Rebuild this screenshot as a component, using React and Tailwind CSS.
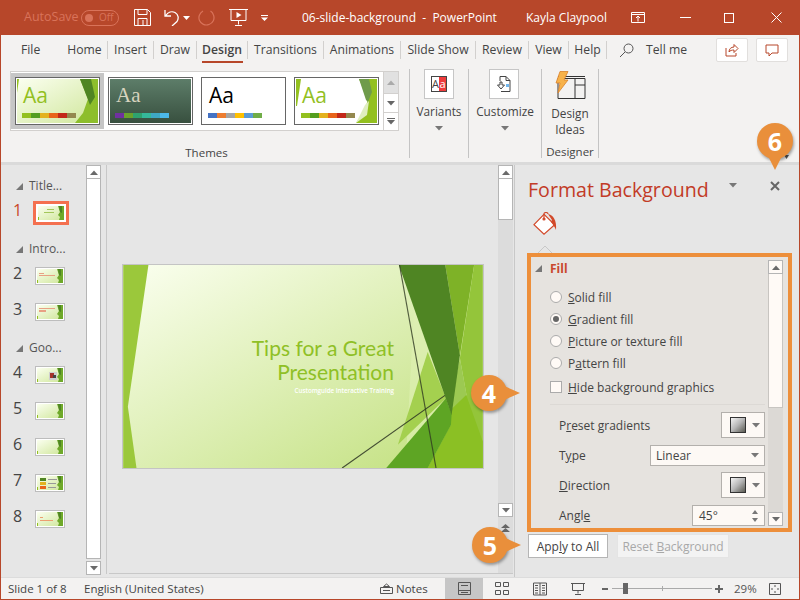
import React from "react";

const swatches = {
  green: ["#93c01f", "#549e1f", "#e3b21f", "#e8641b", "#c3281a", "#94884f"],
  dark: ["#7030a0", "#6aa22c", "#2ea36f", "#35b89a", "#3ea8c4", "#4cb9ea"],
  plain: ["#4472c4", "#ed7d31", "#a5a5a5", "#ffc000", "#5b9bd5", "#70ad47"],
};

const tabs = [
  ["Home", "w-[46px]"],
  ["Insert", "w-[46px]"],
  ["Draw", "w-[43px]"],
  ["Design", "w-[51px]"],
  ["Transitions", "w-[76px]"],
  ["Animations", "w-[77px]"],
  ["Slide Show", "w-[75px]"],
  ["Review", "w-[53px]"],
  ["View", "w-[40px]"],
  ["Help", "w-[38px]"],
];

const Caret = ({ className = "" }) => (
  <svg width="8" height="5" viewBox="0 0 8 5" className={className}>
    <path d="M0 0h8L4 4.500z" fill="currentColor" />
  </svg>
);

const Corner = () => (
  <svg width="7" height="7" viewBox="0 0 7 7" className="text-[#777]">
    <path d="M7 0v7H0z" fill="currentColor" />
  </svg>
);

const ScrollBtn = ({ down, className = "" }) => (
  <div className={`w-[15px] h-[14px] shrink-0 bg-white border border-[#b5b5b5] flex items-center justify-center text-[#6a6a6a] ${className}`}>
    <svg width="8" height="5" viewBox="0 0 8 5">
      <path d={down ? "M0 0h8L4 4.500z" : "M0 5h8L4 .5z"} fill="currentColor" />
    </svg>
  </div>
);

const ThemeThumb = ({ kind, selected }) => {
  const colors = kind === "dark" ? swatches.dark : kind === "plain" ? swatches.plain : swatches.green;
  return (
    <div className={`w-[93px] h-[56px] flex items-center justify-center ${selected ? "bg-[#c6c6c6]" : ""}`}>
      <div className="w-[85px] h-[48px] border border-[#666] bg-white p-px">
        <div className="relative w-full h-full overflow-hidden">
          <svg viewBox="0 0 81 44" width="81" height="44" className="absolute inset-0">
            <defs>
              <linearGradient id="thA" x1="0" y1="0" x2="1" y2="1">
                <stop offset="0" stopColor="#fbfff0" />
                <stop offset="1" stopColor="#cfe69a" />
              </linearGradient>
              <linearGradient id="thB" x1="0" y1="0" x2="0" y2="1">
                <stop offset="0" stopColor="#5d7d69" />
                <stop offset="1" stopColor="#38503f" />
              </linearGradient>
            </defs>
            {kind === "first" && (
              <>
                <rect width="81" height="44" fill="url(#thA)" />
                <path d="M0 0h2L0 14z" fill="#93c01f" />
                <path d="M63 0h18v44H58l8-10 5-14z" fill="#8dbe2c" />
                <path d="M63 0h11l4 18-5 8z" fill="#4f8523" />
              </>
            )}
            {kind === "dark" && <rect width="81" height="44" fill="url(#thB)" />}
            {kind === "fourth" && (
              <>
                <rect width="81" height="44" fill="#fff" />
                <path d="M0 0h5L1 27 0 27z" fill="#93c01f" />
                <path d="M63 0h18v44H60l9-13 3-11z" fill="#93c01f" />
                <path d="M63 0h10l3 13-4 10-2-2z" fill="#6f9b4b" />
                <path d="M60 44l9-18 4-4-2 14z" fill="#dfeec0" />
              </>
            )}
          </svg>
          <span
            className={`absolute left-[6px] top-[3px] text-[21px] leading-[26px] ${
              kind === "dark"
                ? "text-[#d8d4bf] font-['Liberation_Serif',serif]"
                : kind === "plain"
                ? "text-black"
                : "text-[#93c01f]"
            }`}
          >
            Aa
          </span>
          <div className="absolute left-[5px] bottom-[5px] flex">
            {colors.map((c) => (
              <div key={c} className="w-[9px] h-[5px]" style={{ backgroundColor: c }} />
            ))}
          </div>
        </div>
      </div>
    </div>
  );
};

const Thumb = ({ marks }) => (
  <svg width="26" height="14" viewBox="0 0 26 14">
    <rect width="26" height="14" fill="url(#thA)" />
    <path d="M0 11h1v3H0z" fill="#93c01f" />
    <path d="M20 0h6v14h-5l1-3-2-2 2-3z" fill="#6fa92a" />
    <path d="M21 0h3v7l-2-1z" fill="#4f8523" />
    {marks === "title" && <path d="M9 3h7v1H9zM6 6h10v1H6z" fill="#a3c75a" />}
    {marks === "intro" && <path d="M2 4h5v1H2zM2 6h16v1H2z" fill="#e8a183" />}
    {marks === "intro2" && <path d="M2 3h16v1H2zM2 5h7v2H2z" fill="#e8a183" />}
    {marks === "photo" && (
      <>
        <rect x="12" y="4" width="8" height="8" fill="#cfcfcf" />
        <rect x="13" y="5" width="4" height="5" fill="#a5322a" />
        <rect x="16" y="7" width="3" height="3" fill="#444" />
      </>
    )}
    {marks === "table" && (
      <>
        <rect x="3" y="2" width="6" height="3" fill="#4f8523" />
        <rect x="3" y="6" width="6" height="3" fill="#e3b21f" />
        <rect x="3" y="10" width="6" height="3" fill="#e8641b" />
        <path d="M11 3h9v1h-9zM11 7h8v1h-8zM11 11h8v1h-8z" fill="#999" />
      </>
    )}
    {marks === "last" && <path d="M3 5h3v1H3zM3 8h13v1H3z" fill="#ec9f70" />}
  </svg>
);

const SectionRow = ({ label, className = "" }) => (
  <div className={`h-[18px] flex items-center pl-[15px] gap-[6px] text-[#555] text-[12px] ${className}`}>
    <Corner />
    <span>{label}</span>
  </div>
);

const SlideRow = ({ n, marks, selected }) => (
  <div className="h-[36px] flex items-center relative">
    <span className={`w-[33px] pl-[12px] -mt-[7px] text-[16px] leading-[20px] ${selected ? "text-[#c9482b]" : "text-[#444]"}`}>
      {n}
    </span>
    <div className={`flex ${selected ? "-ml-px border-[3px] border-[#f4704f] bg-white p-[2px]" : "ml-px border border-[#bdbdbd] bg-white p-px"}`}>
      <Thumb marks={marks} />
    </div>
  </div>
);

const Radio = ({ children, checked }) => (
  <div className="h-[22px] flex items-center text-[#444] text-[12px]">
    <div className="w-[12px] h-[12px] ml-[19px] rounded-full border border-[#ababab] bg-[#fffaf6] flex items-center justify-center">
      {checked && <div className="w-[6px] h-[6px] rounded-full bg-[#666]" />}
    </div>
    <span className="ml-[6px] pt-px">{children}</span>
  </div>
);

const GradientBtn = ({ className = "" }) => (
  <div className={`w-[44px] h-[26px] border border-[#b3b0ac] bg-[#fdf9f5] flex items-center pl-[8px] gap-[6px] text-[#777] ${className}`}>
    <div className="w-[16px] h-[16px] border border-[#333] bg-gradient-to-br from-[#f5f5f5] via-[#b5b5b5] to-[#5c5c54]" />
    <Caret />
  </div>
);

const Callout = ({ n, className, tail }) => (
  <div className={`absolute w-[36px] h-[36px] rounded-full bg-[#e98f3b] shadow-[1px_2px_3px_rgba(0,0,0,0.35)] flex items-center justify-center text-white font-bold text-[25px] leading-none ${className}`}>
    {tail === "right" ? (
      <svg width="18" height="16" viewBox="0 0 18 16" className="absolute left-[31px] top-[10px]">
        <path d="M0 0l18 8L0 16z" fill="#e98f3b" />
      </svg>
    ) : (
      <svg width="16" height="16" viewBox="0 0 16 16" className="absolute left-[10px] top-[31px]">
        <path d="M0 0h16L8 16z" fill="#e98f3b" />
      </svg>
    )}
    <span className="relative">{n}</span>
  </div>
);

const App = () => {
  return (
    <div className="relative w-[800px] h-[600px] overflow-hidden flex flex-col bg-[#f3f2f1] border-x border-b border-[#b7472a] font-['Open_Sans',sans-serif] text-[#444]">
      {/* title bar */}
      <div className="h-[35px] shrink-0 -mx-px bg-[#b7472a] flex items-center text-white text-[12px]">
        <span className="ml-[24px] w-[50px] text-[#d9735a] text-[12.5px]">AutoSave</span>
        <div className="ml-[7px] w-[38px] h-[16px] rounded-full border border-[#d9735a] flex items-center pl-[3px] text-[#d9735a] text-[10px]">
          <div className="w-[8px] h-[8px] rounded-full bg-[#d9735a]" />
          <span className="ml-[6px]">Off</span>
        </div>
        <svg width="17" height="17" viewBox="0 0 17 17" className="ml-[15px]" fill="none" stroke="#fff" strokeWidth="1">
          <path d="M.5.5h13l3 3v13H.5zM4 .5v5h9v-5M4 16.500v-7h9v7M9 11v5" />
        </svg>
        <svg width="17" height="17" viewBox="0 0 17 17" className="ml-[13px]" fill="none" stroke="#fff" strokeWidth="1.300">
          <path d="M1 1v6h6M1.500 7C4 3 8 2 11 3.500c3.500 2 4 6 2 9L8 17" />
        </svg>
        <svg width="7" height="4" viewBox="0 0 7 4" className="ml-[2px]">
          <path d="M0 0h7L3.500 4z" fill="#fff" />
        </svg>
        <svg width="17" height="17" viewBox="0 0 17 17" className="ml-[8px]" fill="none" stroke="#d9735a" strokeWidth="1.200">
          <path d="M5 2C1.500 4 0 8 1.500 11.500 3 15 7 17 11 15.500 15 14 17 10 15.500 6 15 4.500 14 3 12.500 2" />
        </svg>
        <svg width="21" height="21" viewBox="0 0 21 21" className="ml-[13px]" fill="none" stroke="#fff" strokeWidth="1">
          <path d="M1 2.500h19M3 2.500v11h15v-11M10.500 13.500v4M7 18.500h7" />
          <path d="M8.500 5l5 3-5 3z" fill="#fff" stroke="none" />
        </svg>
        <svg width="7" height="6" viewBox="0 0 7 6" className="ml-[12px]">
          <path d="M0 0h7v1H0zM0 2.500h7L3.500 6z" fill="#fff" />
        </svg>
        <span className="ml-[34px] w-[224px] whitespace-pre">06-slide-background  -  PowerPoint</span>
        <span className="w-[105px]">Kayla Claypool</span>
        <svg width="14" height="12" viewBox="0 0 14 12" fill="none" stroke="#fff" strokeWidth="1">
          <path d="M.5 .5h13v10H.5zM.5 2.500h13M7 9.500V4.500M5 6l2-2 2 2" />
        </svg>
        <div className="ml-[35px] w-[11px] h-px bg-white" />
        <div className="ml-[33px] w-[10px] h-[10px] border border-white" />
        <svg width="11" height="11" viewBox="0 0 11 11" className="ml-[37px]" stroke="#fff" strokeWidth="1">
          <path d="M.5.5l10 10M10.500.5l-10 10" />
        </svg>
      </div>

      {/* tab row */}
      <div className="h-[30px] shrink-0 flex items-center text-[12.2px] text-[#444]">
        <span className="ml-[20px] w-[41px] pt-px">File</span>
        {tabs.map(([t, w]) => (
          <div key={t} className={`${w} h-[18px] relative flex items-center justify-center border-r border-[#d2d0ce]`}>
            <span className={`pt-px ${t === "Design" ? "font-semibold text-[#444]" : ""}`}>{t}</span>
            {t === "Design" && <div className="absolute left-[5px] right-[4px] top-[20px] h-[2px] bg-[#b7472a]" />}
          </div>
        ))}
        <svg width="15" height="15" viewBox="0 0 15 15" className="ml-[12px]" fill="none" stroke="#555" strokeWidth="1">
          <circle cx="9.500" cy="5.500" r="4.500" />
          <path d="M6 9l-5 5" />
        </svg>
        <span className="ml-[12px] w-[41px] pt-px">Tell me</span>
        <div className="ml-[29px] w-[32px] h-[24px] bg-white border border-[#e1dfdd] rounded-[2px] flex items-center justify-center">
          <svg width="14" height="14" viewBox="0 0 14 14" fill="none" stroke="#b7472a" strokeWidth="1">
            <path d="M1 5v8h10v-3M4 9c0-3 2-5 5-5V1.500l4 4-4 4V7C7 7 5 7.500 4 9z" />
          </svg>
        </div>
        <div className="ml-[8px] w-[32px] h-[24px] bg-white border border-[#e1dfdd] rounded-[2px] flex items-center justify-center">
          <svg width="14" height="13" viewBox="0 0 14 13" fill="none" stroke="#b7472a" strokeWidth="1">
            <path d="M1 1h12v8H7l-3 3V9H1z" />
          </svg>
        </div>
      </div>

      {/* ribbon */}
      <div className="h-[97px] shrink-0 flex text-[11.8px] text-[#444]">
        <div className="w-[408px] shrink-0 flex flex-col">
          <div className="ml-[9px] mt-[6px] w-[389px] h-[60px] bg-white border border-[#d2d0ce] flex">
            <div className="flex-1 flex items-center">
              <ThemeThumb kind="first" selected />
              <ThemeThumb kind="dark" />
              <ThemeThumb kind="plain" />
              <ThemeThumb kind="fourth" />
            </div>
            <div className="w-[15px] shrink-0 flex flex-col border-l border-[#d2d0ce] text-[#666]">
              <div className="h-[21px] bg-[#e1e1e1] flex items-center justify-center text-[#aaa]">
                <svg width="8" height="5" viewBox="0 0 8 5"><path d="M0 5h8L4 .5z" fill="currentColor" /></svg>
              </div>
              <div className="h-[20px] border-y border-[#d2d0ce] flex items-center justify-center"><Caret /></div>
              <div className="flex-1 flex flex-col items-center justify-center gap-px">
                <div className="w-[8px] h-px bg-[#666]" />
                <Caret />
              </div>
            </div>
          </div>
          <div className="mt-[14px] text-center pl-[3px] text-[11.5px] leading-[16px]">Themes</div>
        </div>
        <div className="mt-[4px] mb-[4px] w-[59px] shrink-0 border-l border-[#c4c4c4] flex flex-col items-center">
          <div className="w-[30px] h-[30px] bg-white border border-[#c6c6c6] flex items-center justify-center">
            <div className="w-[16px] h-[16px] relative border border-[#444] flex text-[11px] leading-[14px]">
              <span className="w-[7px] text-[#444]">A</span>
              <span className="flex-1 bg-[#ee3b3b] text-white text-center">a</span>
            </div>
          </div>
          <span className="mt-[3px] leading-[18px]">Variants</span>
          <Caret className="mt-[6px] text-[#777]" />
        </div>
        <div className="mt-[4px] mb-[4px] w-[73px] shrink-0 border-l border-[#c4c4c4] flex flex-col items-center">
          <div className="-ml-[2px] w-[30px] h-[30px] bg-white border border-[#c6c6c6] flex items-center justify-center">
            <svg width="14" height="16" viewBox="0 0 14 16" fill="none" stroke="#444" strokeWidth="1">
              <path d="M3 5V.5h6l4 4v11H4M9 .5v4h4" />
              <path d="M3 6v3H.5L4 13l3.500-4H5V6z" />
              <rect x="9" y="8" width="3" height="3" fill="#6fb6ee" stroke="none" />
            </svg>
          </div>
          <span className="mt-[3px] leading-[18px]">Customize</span>
          <Caret className="mt-[6px] text-[#777]" />
        </div>
        <div className="mt-[4px] mb-[4px] w-[58px] shrink-0 border-x border-[#c4c4c4] flex flex-col items-center relative">
          <svg width="32" height="30" viewBox="0 0 32 30" className="mt-[2px] ml-px">
            <g fill="none" stroke="#333">
              <path d="M3 7.500h27v20H3zM3 5.500h27M20 7.500v20M20 14h10" strokeWidth="1" />
            </g>
            <path d="M5 .5h8L9 9h4L3 22l2-10H1z" fill="#f7b24a" stroke="#d9822b" strokeWidth=".8" />
          </svg>
          <span className="mt-[4px] leading-[16px] text-center">Design<br />Ideas</span>
          <span className="absolute bottom-[-2px] text-[11.5px] leading-[16px]">Designer</span>
        </div>
        <svg width="5" height="4" viewBox="0 0 5 4" className="ml-auto mr-[10px] mt-[90px] text-[#555]">
          <path d="M0 0h5L2.500 4z" fill="currentColor" />
        </svg>
      </div>

      <div className="h-[3px] shrink-0 bg-[#dadada]" />

      {/* workspace */}
      <div className="h-[412px] shrink-0 flex bg-[#e6e6e6]">
        <div className="w-[85px] shrink-0 pt-[12px]">
          <SectionRow label="Title..." />
          <SlideRow n="1" marks="title" selected />
          <SectionRow label="Intro..." className="mt-[9px]" />
          <SlideRow n="2" marks="intro" />
          <SlideRow n="3" marks="intro2" />
          <SectionRow label="Goo..." className="mt-[9px]" />
          <SlideRow n="4" marks="photo" />
          <SlideRow n="5" />
          <SlideRow n="6" />
          <SlideRow n="7" marks="table" />
          <SlideRow n="8" marks="last" />
        </div>
        <div className="w-[15px] shrink-0 flex flex-col h-[410px]">
          <ScrollBtn />
          <div className="flex-1 bg-white border-x border-b border-[#b5b5b5] mb-[2px]" />
          <ScrollBtn down />
        </div>
        <div className="w-[392px] shrink-0 ml-[5px] h-[409px] border-l border-[#c8c8c8] relative">
          <div className="ml-[15px] mt-[99px] w-[362px] h-[205px] border border-[#c4c4c4] relative">
            <svg viewBox="0 0 1084 612" width="360" height="203" className="block">
              <defs>
                <linearGradient id="slideBg" x1="0" y1="0" x2="1" y2="1">
                  <stop offset="0" stopColor="#fbfff0" />
                  <stop offset="1" stopColor="#c0df7a" />
                </linearGradient>
              </defs>
              <rect width="1084" height="612" fill="url(#slideBg)" />
              <path d="M0 0h76L14 427l26 185H0z" fill="#9bc83b" />
              <path d="M884 0l88 400-118 150z" fill="#dff0b4" opacity=".6" />
              <path d="M918 262l55 140-145 140z" fill="#a4d04f" />
              <path d="M660 612l340-240" stroke="#2b3322" strokeWidth="3.500" opacity=".85" fill="none" />
              <path d="M971 0h87l-43 272z" fill="#7eb227" />
              <path d="M1058 0h26v612H918l117-220-20-112z" fill="#94c53a" />
              <path d="M1015 282l20 110-47 90-8-38z" fill="#9cc952" />
              <path d="M980 444l8 38-70 130H1084v-80l-50-140z" fill="#8bc024" />
              <path d="M973 402l17 48-2 32-70 130H793z" fill="#5ea524" />
              <path d="M831 0h140l44 272-25 180z" fill="#4f8523" />
              <path d="M833 0l110 612" stroke="#2f3a22" strokeWidth="3.500" opacity=".8" fill="none" />
            </svg>
            <div className="absolute right-[89px] top-[71px] text-right text-[#8fc026] font-['Lato',sans-serif] text-[21px] leading-[24px]">
              Tips for a Great
              <br />
              Presentation
            </div>
            <div className="absolute right-[89px] top-[121px] text-white text-[6.200px] leading-[9px] font-semibold">
              Customguide Interactive Training
            </div>
          </div>
          <div className="absolute left-[2px] right-0 bottom-0 h-px bg-[#c8c8c8]" />
        </div>
        <div className="w-[15px] shrink-0 h-[409px] flex flex-col bg-[#dcdcdc] border-b border-[#c8c8c8]">
          <ScrollBtn />
          <div className="h-[41px] bg-white border-x border-b border-[#b5b5b5]" />
          <div className="h-[283px]" />
          <ScrollBtn down />
          <div className="mt-[7px] flex justify-center text-[#666]">
            <svg width="9" height="9" viewBox="0 0 9 9" fill="currentColor">
              <path d="M4.500 0L9 4H0zM4.500 4L9 8H0z" />
            </svg>
          </div>
        </div>

        {/* format pane */}
        <div className="w-[285px] shrink-0 ml-px border-l border-[#c8c8c8] relative">
          <div className="h-[47px] flex items-center pl-[13px] pt-[2px]">
            <span className="text-[#c23b26] text-[19.600px]">Format Background</span>
            <Caret className="absolute left-[214px] top-[18px] text-[#777]" />
            <svg width="10" height="10" viewBox="0 0 10 10" className="absolute left-[255px] top-[16px]" stroke="#666" strokeWidth="2">
              <path d="M1 1l8 8M9 1L1 9" />
            </svg>
          </div>
          <div className="h-[28px] pl-[18px]">
            <svg width="26" height="24" viewBox="0 0 26 24" fill="none" stroke="#d2492a" strokeWidth="1.200">
              <path d="M1 12.700L11 2.300l10.700 10.400L11 22.300z" fill="#fff" />
              <circle cx="11" cy="7" r="1" fill="#d2492a" />
              <path d="M11 7V2c0-2 4-2 4 0" />
              <path d="M15 2c5 1 9 6 8 16-1-3-3-5-5-8l1-2z" fill="#d2492a" stroke="none" />
            </svg>
          </div>
          <div className="ml-[12px] mt-[-2px] relative h-[15px]">
            <svg width="14" height="8" viewBox="0 0 14 8" className="absolute left-[11px] top-[7px]" fill="#e6e6e6" stroke="#c8c8c8">
              <path d="M0 8l7-7 7 7" />
            </svg>
          </div>
          <div className="ml-[12px] w-[265px] h-[279px] border-[4px] border-[#ed8f3b] bg-[#e6e3df] flex text-[12px] text-[#444]">
            <div className="w-[237px] shrink-0">
              <div className="h-[22px] flex items-center pl-[4px] gap-[8px]">
                <Corner />
                <span className="font-bold text-[#c9482b] pt-px">Fill</span>
              </div>
              <div className="mt-[7px]">
                <Radio><u>S</u>olid fill</Radio>
                <Radio checked><u>G</u>radient fill</Radio>
                <Radio><u>P</u>icture or texture fill</Radio>
                <Radio>P<u>a</u>ttern fill</Radio>
              </div>
              <div className="h-[26px] flex items-center">
                <div className="ml-[19px] w-[12px] h-[12px] border border-[#ababab] bg-[#fffaf6]" />
                <span className="ml-[6px] pt-px"><u>H</u>ide background graphics</span>
              </div>
              <div className="mt-[4px] ml-[19px] mr-[3px] h-px bg-[#dcd9d5]" />
              <div className="mt-[7px] h-[26px] flex items-center justify-between pl-[28px] pr-[3px]">
                <span className="pt-px">P<u>r</u>eset gradients</span>
                <GradientBtn />
              </div>
              <div className="mt-[7px] h-[21px] flex items-center justify-between pl-[28px] pr-[3px]">
                <span className="pt-px">T<u>y</u>pe</span>
                <div className="w-[115px] h-[21px] border border-[#b3b0ac] bg-[#fdf9f5] flex items-center justify-between px-[5px] text-[#777]">
                  <span className="text-[#444]">Linear</span>
                  <Caret />
                </div>
              </div>
              <div className="mt-[6px] h-[26px] flex items-center justify-between pl-[28px] pr-[3px]">
                <span className="pt-px"><u>D</u>irection</span>
                <GradientBtn />
              </div>
              <div className="mt-[7px] h-[21px] flex items-center justify-between pl-[28px] pr-[3px]">
                <span className="pt-px">Angl<u>e</u></span>
                <div className="w-[73px] h-[21px] border border-[#b3b0ac] bg-[#fdf9f5] flex items-center justify-between pl-[6px] pr-[6px] text-[#777]">
                  <span className="text-[#444]">45°</span>
                  <div className="flex flex-col gap-[4px]">
                    <svg width="6" height="4" viewBox="0 0 6 4"><path d="M0 4h6L3 0z" fill="currentColor" /></svg>
                    <svg width="6" height="4" viewBox="0 0 6 4"><path d="M0 0h6L3 4z" fill="currentColor" /></svg>
                  </div>
                </div>
              </div>
            </div>
            <div className="w-[15px] shrink-0 mt-[3px] mb-[2px] bg-[#dcd9d5] flex flex-col">
              <ScrollBtn className="!bg-[#fffaf6]" />
              <div className="h-[134px] bg-[#fffaf6] border-x border-b border-[#c8c5c1]" />
              <div className="flex-1" />
              <ScrollBtn down className="!bg-[#fffaf6]" />
            </div>
          </div>
          <div className="ml-[13px] mt-[2px] flex gap-[9px] text-[12px]">
            <div className="w-[80px] h-[24px] bg-white border border-[#b5b5b5] flex items-center justify-center text-[#444]">
              <span className="pt-px">App<u>l</u>y to All</span>
            </div>
            <div className="w-[112px] h-[24px] bg-[#f3f3f3] border border-[#e4e4e4] flex items-center justify-center text-[#a8a8a8]">
              <span className="pt-px">Reset <u>B</u>ackground</span>
            </div>
          </div>
        </div>
      </div>

      {/* status bar */}
      <div className="h-[22px] shrink-0 flex items-center bg-[#f3f2f1] text-[11.500px] text-[#444] border-t border-[#dcdcdc]">
        <span className="ml-[7px] w-[76px]">Slide 1 of 8</span>
        <span className="w-[296px]">English (United States)</span>
        <svg width="13" height="11" viewBox="0 0 13 11" fill="none" stroke="#555">
          <path d="M.5 4.500h12v6H.5zM3 7.500h7M6.500 1l3 2.500h-6z" />
        </svg>
        <span className="ml-[3px] w-[49px]">Notes</span>
        <div className="w-[38px] h-[21px] bg-[#c6c6c6] flex items-center justify-center">
          <svg width="13" height="13" viewBox="0 0 13 13" fill="none" stroke="#555">
            <path d="M.5.5h12v12H.5zM.5 8.500h12M3 3.500h7M3 10.500h7" />
          </svg>
        </div>
        <svg width="14" height="13" viewBox="0 0 14 13" fill="none" stroke="#555" className="ml-[12px]">
          <path d="M.5.5h5v4h-5zM8.500.5h5v4h-5zM.5 8.500h5v4h-5zM8.500 8.500h5v4h-5z" />
        </svg>
        <svg width="14" height="14" viewBox="0 0 14 14" fill="none" stroke="#555" className="ml-[24px]">
          <path d="M.5 1h13v12H.5zM7 1v12M2 3.500h3M2 6h3M2 8.500h3M2 11h3M9 3.500h3M9 6h3M9 8.500h3M9 11h3" />
        </svg>
        <svg width="14" height="14" viewBox="0 0 14 14" fill="none" stroke="#555" className="ml-[24px]">
          <path d="M0 1.500h14M1.500 1.500v7h11v-7M7 8.500v3M4 12.500h6" />
        </svg>
        <div className="ml-[17px] w-[6px] h-[2px] bg-[#666]" />
        <div className="ml-[4px] w-[100px] h-px bg-[#aaa] relative">
          <div className="absolute left-[11px] -top-[5px] w-[5px] h-[11px] bg-[#666]" />
          <div className="absolute left-[50px] -top-[2px] w-px h-[5px] bg-[#aaa]" />
        </div>
        <svg width="8" height="8" viewBox="0 0 8 8" className="ml-[3px]" fill="#666">
          <path d="M3 0h2v3h3v2H5v3H3V5H0V3h3z" />
        </svg>
        <span className="ml-[11px] w-[35px] text-[#555]">29%</span>
        <svg width="12" height="12" viewBox="0 0 12 12" fill="none" stroke="#555">
          <path d="M.5.5h11v11H.5z" />
          <path d="M6 2v2M6 8v2M2 6h2M8 6h2" />
        </svg>
      </div>

      <Callout n="6" tail="down" className="left-[756px] top-[123px]" />
      <Callout n="4" tail="right" className="left-[470px] top-[375px]" />
      <Callout n="5" tail="right" className="left-[471px] top-[527px]" />
    </div>
  );
};

export default App;
